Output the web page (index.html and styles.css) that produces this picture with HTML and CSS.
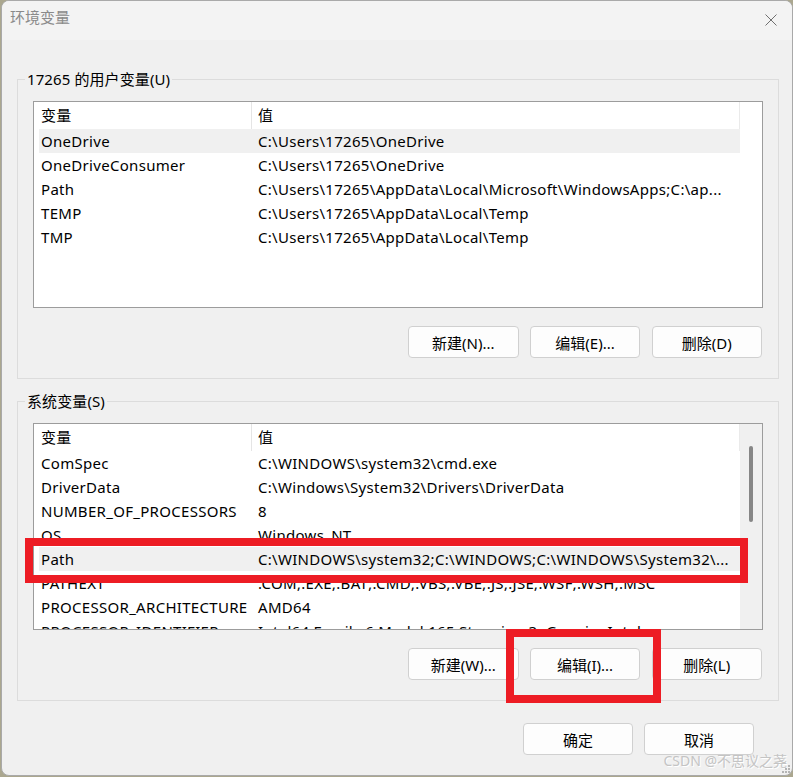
FILE: index.html
```html
<!DOCTYPE html>
<html lang="zh-CN">
<head>
    <meta charset="UTF-8">
    <meta name="viewport" content="width=device-width, initial-scale=1.0">
    <title>环境变量</title>
    <link rel="stylesheet" href="styles.css">
</head>
<body>
    <div class="window">
        <div class="titlebar">
            <span class="title">环境变量</span>
            <span class="close">
                <svg width="12" height="12" viewBox="0 0 12 12"><path d="M0.5 0.5 L11.5 11.5 M11.5 0.5 L0.5 11.5" stroke="#6f6f6f" stroke-width="1" fill="none"/></svg>
            </span>
        </div>

        <div class="content">
            <!-- 用户变量 -->
            <fieldset class="group">
                <legend>17265 的用户变量(U)</legend>
                <div class="list">
                    <div class="list-main">
                        <div class="list-head">
                            <div class="head-cell">变量</div>
                            <div class="head-cell">值</div>
                        </div>
                        <div class="row selected"><span>OneDrive</span><span>C:\Users\17265\OneDrive</span></div>
                        <div class="row"><span>OneDriveConsumer</span><span>C:\Users\17265\OneDrive</span></div>
                        <div class="row"><span>Path</span><span>C:\Users\17265\AppData\Local\Microsoft\WindowsApps;C:\ap...</span></div>
                        <div class="row"><span>TEMP</span><span>C:\Users\17265\AppData\Local\Temp</span></div>
                        <div class="row"><span>TMP</span><span>C:\Users\17265\AppData\Local\Temp</span></div>
                    </div>
                    <div class="list-side"></div>
                </div>
                <div class="buttons">
                    <button class="btn">新建(N)...</button>
                    <button class="btn">编辑(E)...</button>
                    <button class="btn">删除(D)</button>
                </div>
            </fieldset>

            <!-- 系统变量 -->
            <fieldset class="group">
                <legend>系统变量(S)</legend>
                <div class="list">
                    <div class="list-main">
                        <div class="list-head">
                            <div class="head-cell">变量</div>
                            <div class="head-cell">值</div>
                        </div>
                        <div class="row"><span>ComSpec</span><span>C:\WINDOWS\system32\cmd.exe</span></div>
                        <div class="row"><span>DriverData</span><span>C:\Windows\System32\Drivers\DriverData</span></div>
                        <div class="row"><span>NUMBER_OF_PROCESSORS</span><span>8</span></div>
                        <div class="row"><span>OS</span><span>Windows_NT</span></div>
                        <div class="row selected"><span>Path</span><span>C:\WINDOWS\system32;C:\WINDOWS;C:\WINDOWS\System32\...</span></div>
                        <div class="row"><span>PATHEXT</span><span>.COM;.EXE;.BAT;.CMD;.VBS;.VBE;.JS;.JSE;.WSF;.WSH;.MSC</span></div>
                        <div class="row"><span>PROCESSOR_ARCHITECTURE</span><span>AMD64</span></div>
                        <div class="row"><span>PROCESSOR_IDENTIFIER</span><span>Intel64 Family 6 Model 165 Stepping 3, GenuineIntel</span></div>
                    </div>
                    <div class="list-side scrollbar"><div class="thumb"></div></div>
                </div>
                <div class="buttons">
                    <button class="btn">新建(W)...</button>
                    <button class="btn">编辑(I)...</button>
                    <button class="btn">删除(L)</button>
                </div>
            </fieldset>

            <div class="dialog-buttons">
                <button class="btn">确定</button>
                <button class="btn">取消</button>
            </div>
        </div>

        <!-- 红框标注 -->
        <div class="mark mark-row"></div>
        <div class="mark mark-btn"></div>

        <div class="watermark">CSDN @不思议之荛</div>
        <svg class="grip" width="10" height="10" viewBox="0 0 10 10">
            <rect x="7" y="1" width="2" height="2" fill="#b4b4b4"/>
            <rect x="4" y="4" width="2" height="2" fill="#b4b4b4"/>
            <rect x="7" y="4" width="2" height="2" fill="#b4b4b4"/>
            <rect x="1" y="7" width="2" height="2" fill="#b4b4b4"/>
            <rect x="4" y="7" width="2" height="2" fill="#b4b4b4"/>
            <rect x="7" y="7" width="2" height="2" fill="#b4b4b4"/>
        </svg>
    </div>
</body>
</html>
```

FILE: styles.css
```css
body {
    margin: 0;
    padding: 0;
    background-color: #aba78f;
    font-family: "Noto Sans", "Noto Sans CJK SC", sans-serif;
    font-size: 15px;
    color: #000;
    overflow: hidden;
}
.window {
    position: relative;
    box-sizing: border-box;
    width: 792px;
    height: 776px;
    margin-left: 1px;
    background-color: #f0f0f0;
    border: 1px solid #a9a9a9;
    border-radius: 8px;
    overflow: hidden;
}
.titlebar {
    height: 39px;
    background-color: #f3f3f3;
    display: flex;
    justify-content: space-between;
    align-items: flex-start;
}
.title {
    padding: 6px 0 0 8px;
    line-height: 20px;
    color: #8a8a8a;
}
.close {
    width: 46px;
    height: 38px;
    display: flex;
    align-items: center;
    justify-content: center;
    margin-right: -2px;
}
.content {
    padding: 29px 13px 0 15px;
}
.group {
    margin: 0;
    padding: 0 15px 20px 15px;
    border: 1px solid #dcdcdc;
}
.group + .group {
    margin-top: 12px;
}
.group legend {
    margin-left: -8px;
    padding: 0 2px;
    line-height: 20px;
    letter-spacing: 0.1px;
}
.list {
    box-sizing: border-box;
    height: 207px;
    margin-top: 12px;
    border: 1px solid #9c9c9c;
    background-color: #fff;
    display: flex;
    overflow: hidden;
}
.list-main {
    flex: 1;
    overflow: hidden;
    letter-spacing: 0.3px;
}
.list-side {
    width: 22px;
}
.scrollbar {
    background-color: #f0f0f0;
}
.thumb {
    width: 4px;
    height: 76px;
    margin: 22px auto 0 auto;
    border-radius: 2px;
    background-color: #868686;
}
.list-head {
    display: grid;
    grid-template-columns: 218px 1fr;
    height: 27px;
    border-right: 1px solid #eaeaea;
}
.head-cell {
    line-height: 27px;
    padding-left: 6px;
}
.head-cell:first-child {
    padding-left: 7px;
    border-right: 1px solid #e5e5e5;
}
.row {
    display: grid;
    grid-template-columns: 213px 1fr;
    height: 24px;
    line-height: 24px;
    margin-left: 5px;
    white-space: nowrap;
}
.row span {
    overflow: hidden;
    padding-left: 6px;
}
.row span:first-child {
    padding-left: 2px;
}
.row.selected {
    background-color: #f0f0f0;
}
.buttons {
    margin-top: 18px;
    margin-right: 1px;
    display: flex;
    justify-content: flex-end;
    gap: 11.25px;
}
.btn {
    box-sizing: border-box;
    width: 110.5px;
    height: 32px;
    padding: 0;
    background-color: #fdfdfd;
    border: 1px solid #d0d0d0;
    border-radius: 4px;
    font-family: inherit;
    font-size: 15px;
    color: #000;
}
.dialog-buttons {
    margin-top: 22px;
    padding-right: 25px;
    display: flex;
    justify-content: flex-end;
    gap: 11px;
}
.dialog-buttons .btn {
    width: 110px;
}
.mark {
    position: absolute;
    box-sizing: border-box;
    border: 8px solid #ed1c24;
}
.mark-row {
    left: 23px;
    top: 537px;
    width: 723px;
    height: 45px;
}
.mark-btn {
    left: 504px;
    top: 628px;
    width: 155px;
    height: 74px;
}
.watermark {
    position: absolute;
    right: 5px;
    bottom: 5px;
    font-size: 14px;
    line-height: 18px;
    color: #c4c4c4;
    text-shadow: 1px 1px 0 #fff;
}
.grip {
    position: absolute;
    right: 1px;
    bottom: 1px;
}
```
